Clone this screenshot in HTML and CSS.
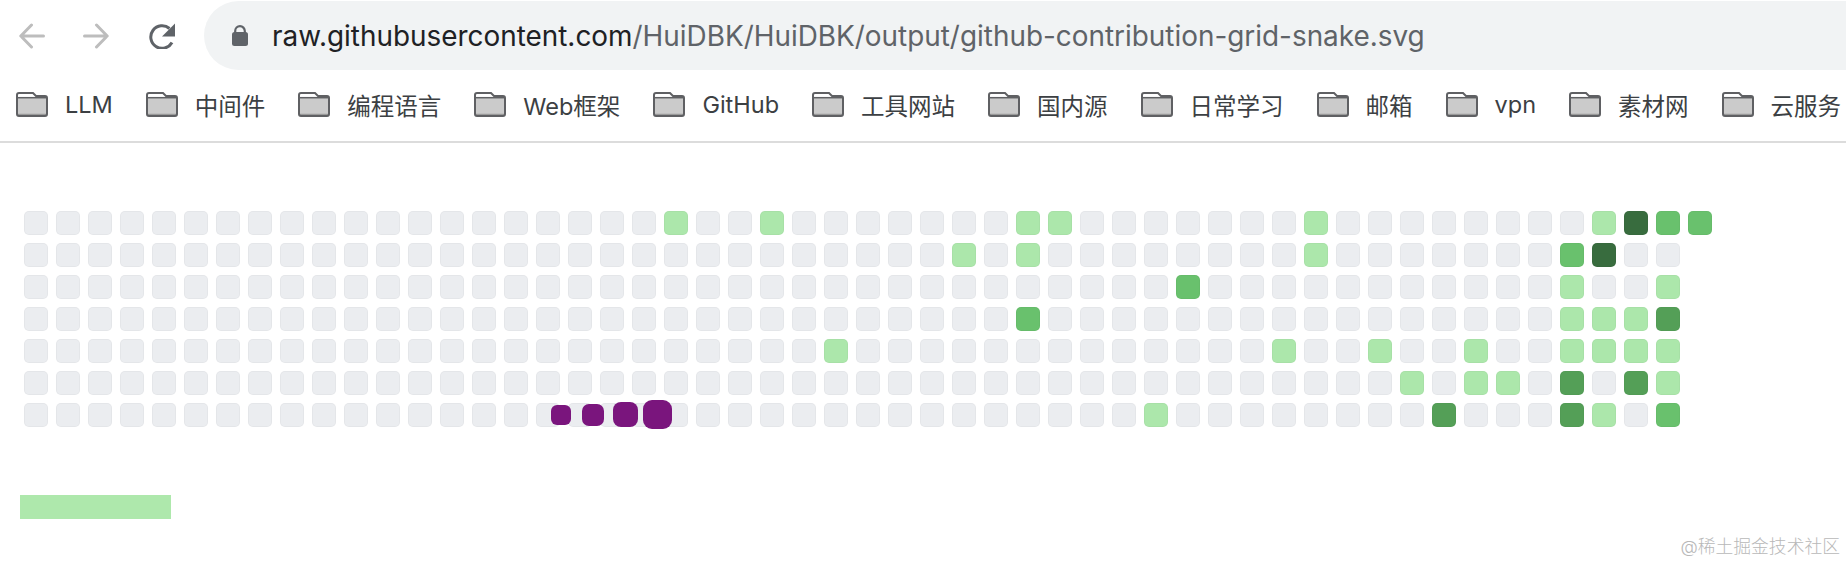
FILE: index.html
```html
<!DOCTYPE html>
<html lang="en">
<head>
    <meta charset="UTF-8">
    <title>github-contribution-grid-snake.svg</title>
    <link rel="stylesheet" href="styles.css">
</head>
<body>
    <!-- Folder icon used by every bookmark -->
    <svg class="icon-defs" width="0" height="0">
        <symbol id="folder" viewBox="0 0 32 25">
            <path d="M1 3a2 2 0 0 1 2-2h14l3 3h9a2 2 0 0 1 2 2v16a2 2 0 0 1-2 2H3a2 2 0 0 1-2-2Z" fill="#fff"/>
            <rect x="1" y="6" width="30" height="15.500" fill="#cbcbcb"/>
            <rect x="1" y="21.500" width="30" height="2" fill="#9a9a9a"/>
            <path d="M1 5.700H31" stroke="#5f6063" stroke-width="1.500" fill="none"/>
            <path d="M1 3a2 2 0 0 1 2-2h14l3 3h9a2 2 0 0 1 2 2v16a2 2 0 0 1-2 2H3a2 2 0 0 1-2-2Z" fill="none" stroke="#5f6063" stroke-width="2"/>
        </symbol>
    </svg>

    <!-- Toolbar -->
    <div class="toolbar">
        <button class="nav-btn" aria-label="Back">
            <svg width="26" height="26" viewBox="0 0 26 26"><path d="M24.500 13H2M12.500 2 1.800 13l10.700 11" fill="none" stroke="#bdbdbd" stroke-width="3" stroke-linecap="round" stroke-linejoin="round"/></svg>
        </button>
        <button class="nav-btn" aria-label="Forward">
            <svg width="26" height="26" viewBox="0 0 26 26"><path d="M1.500 13H24M13.500 2l10.700 11-10.700 11" fill="none" stroke="#bdbdbd" stroke-width="3" stroke-linecap="round" stroke-linejoin="round"/></svg>
        </button>
        <button class="nav-btn" aria-label="Reload">
            <svg width="28" height="26" viewBox="0 0 28 26"><path d="M25 19.500A11.300 11.300 0 1 1 22.500 5.500" fill="none" stroke="#5f6368" stroke-width="3"/><path d="M28 0.500V13.500H15Z" fill="#5f6368"/></svg>
        </button>
        <div class="address">
            <svg class="lock" width="16" height="21" viewBox="0 0 16 21"><path d="M3.200 9V6A4.800 4.800 0 0 1 12.800 6V9" fill="none" stroke="#5f6368" stroke-width="2.200"/><rect y="7" width="16" height="14" rx="2.500" fill="#5f6368"/></svg>
            <span class="url"><span class="host">raw.githubusercontent.com</span>/HuiDBK/HuiDBK/output/github-contribution-grid-snake.svg</span>
        </div>
    </div>

    <!-- Bookmarks -->
    <div class="bookmarks">
        <a class="mark"><svg><use href="#folder"/></svg>LLM</a>
        <a class="mark"><svg><use href="#folder"/></svg>中间件</a>
        <a class="mark"><svg><use href="#folder"/></svg>编程语言</a>
        <a class="mark"><svg><use href="#folder"/></svg>Web框架</a>
        <a class="mark"><svg><use href="#folder"/></svg>GitHub</a>
        <a class="mark"><svg><use href="#folder"/></svg>工具网站</a>
        <a class="mark"><svg><use href="#folder"/></svg>国内源</a>
        <a class="mark"><svg><use href="#folder"/></svg>日常学习</a>
        <a class="mark"><svg><use href="#folder"/></svg>邮箱</a>
        <a class="mark"><svg><use href="#folder"/></svg>vpn</a>
        <a class="mark"><svg><use href="#folder"/></svg>素材网</a>
        <a class="mark"><svg><use href="#folder"/></svg>云服务</a>
    </div>

    <!-- Contribution graph -->
    <div class="content">
        <div class="graph">
            <div class="cells" id="cells"></div>
            <div class="snake s1"></div>
            <div class="snake s2"></div>
            <div class="snake s3"></div>
            <div class="snake s4"></div>
        </div>
        <div class="progress"></div>
    </div>

    <div class="watermark">@稀土掘金技术社区</div>

    <script src="script.js"></script>
</body>
</html>
```

FILE: styles.css
```css
* {
    margin: 0;
    padding: 0;
    box-sizing: border-box;
}

html, body {
    width: 1846px;
    height: 564px;
    overflow: hidden;
}

body {
    position: relative;
    background: #fff;
    font-family: Inter, 'Noto Sans CJK SC', sans-serif;
}

.icon-defs {
    position: absolute;
}

/* Toolbar */
.toolbar {
    display: flex;
    align-items: center;
    height: 70px;
    padding: 1px 0 0 19px;
}

.nav-btn {
    display: flex;
    align-items: center;
    justify-content: center;
    border: none;
    background: none;
}

.nav-btn:nth-child(1) { width: 26px; margin-right: 38px; }
.nav-btn:nth-child(2) { width: 26px; margin-right: 38px; }
.nav-btn:nth-child(3) { width: 28px; margin-right: 29px; }

.address {
    display: flex;
    align-items: center;
    flex: 1;
    height: 69px;
    margin-right: -60px;
    padding-left: 28px;
    gap: 24px;
    border-radius: 35px;
    background: #f1f3f4;
}

.url {
    font-size: 27.900px;
    color: #5f6368;
    white-space: nowrap;
}

.host {
    color: #202124;
}

/* Bookmarks */
.bookmarks {
    display: flex;
    align-items: center;
    gap: 33px;
    height: 73px;
    padding: 0 0 2px 16px;
    border-bottom: 2px solid #dcdcdc;
    white-space: nowrap;
    overflow: hidden;
}

.mark {
    display: flex;
    align-items: center;
    gap: 17px;
    font-size: 23.500px;
    color: #3c4043;
}

.mark svg {
    width: 32px;
    height: 25px;
    flex: none;
}

/* Graph */
.content {
    padding: 68px 0 0 20px;
}

.graph {
    position: relative;
    margin-left: 4px;
}

.cells {
    display: grid;
    grid-template-columns: repeat(53, 24px);
    grid-auto-rows: 24px;
    gap: 8px;
}

.cell {
    border: 1px solid rgba(27, 31, 35, 0.03);
    border-radius: 5px;
    background: #ebedf0;
}

.cell.l1 { background: #ace7ab; }
.cell.l2 { background: #69c16d; }
.cell.l3 { background: #549f57; }
.cell.l4 { background: #386c3e; }
.cell.none { visibility: hidden; }

/* Snake sits over the bottom row */
.snake {
    position: absolute;
    background: #7a157d;
}

.s1 { left: 527px; top: 194px; width: 20px; height: 20px; border-radius: 6px; }
.s2 { left: 558px; top: 193px; width: 22px; height: 22px; border-radius: 7px; }
.s3 { left: 589px; top: 191px; width: 25px; height: 25px; border-radius: 8px; }
.s4 { left: 619px; top: 189px; width: 29px; height: 29px; border-radius: 9px; }

.progress {
    width: 151px;
    height: 24px;
    margin-top: 68px;
    background: #aee8ac;
}

.watermark {
    position: absolute;
    right: 6px;
    bottom: 6px;
    font-size: 17.800px;
    line-height: 22px;
    font-weight: 300;
    color: #b8b8b8;
}
```

FILE: script.js
```js
// Coloured cells per row, as column: level. Everything else stays empty.
const rows = [
    { 20: 1, 23: 1, 31: 1, 32: 1, 40: 1, 49: 1, 50: 4, 51: 2, 52: 2 },
    { 29: 1, 31: 1, 40: 1, 48: 2, 49: 4 },
    { 36: 2, 48: 1, 51: 1 },
    { 31: 2, 48: 1, 49: 1, 50: 1, 51: 3 },
    { 25: 1, 39: 1, 42: 1, 45: 1, 48: 1, 49: 1, 50: 1, 51: 1 },
    { 43: 1, 45: 1, 46: 1, 48: 3, 50: 3, 51: 1 },
    { 35: 1, 44: 3, 48: 3, 49: 1, 51: 2 }
];

const cells = document.getElementById('cells');

rows.forEach((row, r) => {
    for (let col = 0; col < 53; col++) {
        const cell = document.createElement('div');
        cell.className = 'cell';
        // only the first row reaches the last column
        if (col === 52 && r > 0) cell.classList.add('none');
        if (row[col]) cell.classList.add('l' + row[col]);
        cells.appendChild(cell);
    }
});
```
